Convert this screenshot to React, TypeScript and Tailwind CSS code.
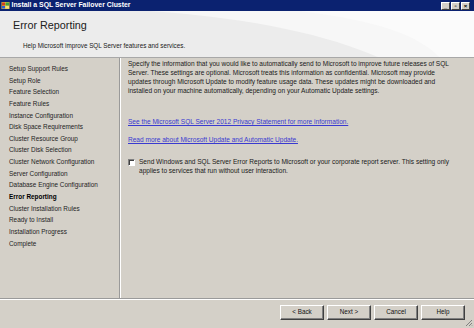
import type { ReactNode } from "react";

const steps = [
  "Setup Support Rules",
  "Setup Role",
  "Feature Selection",
  "Feature Rules",
  "Instance Configuration",
  "Disk Space Requirements",
  "Cluster Resource Group",
  "Cluster Disk Selection",
  "Cluster Network Configuration",
  "Server Configuration",
  "Database Engine Configuration",
  "Error Reporting",
  "Cluster Installation Rules",
  "Ready to Install",
  "Installation Progress",
  "Complete",
];

const font = "font-['Tahoma','Liberation_Sans',sans-serif]";

function WinButton({ children }: { children: ReactNode }) {
  return (
    <button className="w-[44px] h-[15px] bg-[#d4d0c8] text-[6.3px] text-[#111] leading-none border border-t-white border-l-white border-r-[#404040] border-b-[#404040] shadow-[inset_-1px_-1px_0_#808080]">
      {children}
    </button>
  );
}

function CaptionBtn({ children }: { children: ReactNode }) {
  return (
    <div className="w-[9px] h-[8px] bg-[#d4d0c8] border-[0.5px] border-t-white border-l-white border-r-[#404040] border-b-[#404040] flex items-center justify-center text-[6px] font-bold leading-none text-black">
      {children}
    </div>
  );
}

export default function App() {
  return (
    <div className={`w-[474px] h-[328px] bg-[#d4d0c8] flex flex-col overflow-hidden text-[#1a1a1a] ${font}`}>
      {/* Title bar */}
      <div className="h-[11px] bg-[#0b2270] flex items-center pl-[1px] pr-[4px]">
        <svg width="9" height="9" viewBox="0 0 9 9" className="shrink-0">
          <rect x="0.5" y="1" width="8" height="7" fill="#e8c040" />
          <rect x="1" y="1.5" width="3" height="3" fill="#d04020" />
          <rect x="4.5" y="1.5" width="3.5" height="3" fill="#40a040" />
          <rect x="1" y="5" width="3" height="2.5" fill="#3060d0" />
          <rect x="4.5" y="5" width="3.5" height="2.5" fill="#f0e080" />
        </svg>
        <span className="ml-[1.5px] text-white font-bold text-[6.9px] leading-none whitespace-nowrap">
          Install a SQL Server Failover Cluster
        </span>
        <div className="ml-auto flex gap-[1px] mt-[1px]">
          <CaptionBtn>_</CaptionBtn>
          <CaptionBtn>▫</CaptionBtn>
          <CaptionBtn>×</CaptionBtn>
        </div>
      </div>

      {/* Header */}
      <div className="relative h-[47px] bg-[#ececec] border-b border-[#a8a8a8] overflow-hidden">
        <svg className="absolute inset-0" width="474" height="47" viewBox="0 0 474 47">
          <path d="M150 0 C260 8 330 25 380 47 L474 47 L474 0 Z" fill="#f7f7f7" />
          <path d="M300 0 C380 10 420 25 440 47 L474 47 L474 0 Z" fill="#fbfbfb" />
        </svg>
        <div className="relative pl-[13px] pt-[7px]">
          <div className="text-[10.8px] leading-[14px] text-[#202020]">Error Reporting</div>
          <div className="pl-[10px] mt-[10px] text-[6.3px] leading-[8px] text-[#202020] whitespace-nowrap">
            Help Microsoft improve SQL Server features and services.
          </div>
        </div>
      </div>

      {/* Body */}
      <div className="flex h-[240px]">
        <div className="w-[120px] border-r border-[#9a9a9a] shadow-[1px_0_0_white] pt-[5px] pl-[9px]">
          {steps.map((s) => (
            <div
              key={s}
              className={`h-[11.65px] leading-[11.65px] text-[6.4px] whitespace-nowrap ${
                s === "Error Reporting" ? "font-bold text-black" : "text-[#1e1e1e]"
              }`}
            >
              {s}
            </div>
          ))}
        </div>
        <div className="flex-1 pl-[8px] pt-[1px] text-[6.55px] leading-[9px] whitespace-nowrap">
          <div>
            <div>Specify the information that you would like to automatically send to Microsoft to improve future releases of SQL</div>
            <div>Server. These settings are optional. Microsoft treats this information as confidential. Microsoft may provide</div>
            <div>updates through Microsoft Update to modify feature usage data. These updates might be downloaded and</div>
            <div>installed on your machine automatically, depending on your Automatic Update settings.</div>
          </div>
          <div className="mt-[22px] text-[#3a3ad0] underline">
            See the Microsoft SQL Server 2012 Privacy Statement for more information.
          </div>
          <div className="mt-[9px] text-[#3a3ad0] underline">
            Read more about Microsoft Update and Automatic Update.
          </div>
          <div className="mt-[13px] flex items-start">
            <div className="mt-[2px] w-[7px] h-[7px] bg-white border border-t-[#808080] border-l-[#808080] border-r-white border-b-white shadow-[inset_1px_1px_0_#404040] shrink-0" />
            <div className="ml-[4px]">
              <div>Send Windows and SQL Server Error Reports to Microsoft or your corporate report server. This setting only</div>
              <div>applies to services that run without user interaction.</div>
            </div>
          </div>
        </div>
      </div>

      {/* Footer */}
      <div className="relative flex-1 border-t border-[#9a9a9a] shadow-[inset_0_1px_0_white] flex items-start justify-end pt-[6px] pr-[9px] gap-[3px]">
        <WinButton>&lt; Back</WinButton>
        <WinButton>Next &gt;</WinButton>
        <WinButton>Cancel</WinButton>
        <WinButton>Help</WinButton>
        <svg className="absolute right-[1px] bottom-[1px]" width="8" height="8" viewBox="0 0 8 8">
          <path d="M7 1 L1 7 M7 4 L4 7 M7 6.5 L6.5 7" stroke="#808080" strokeWidth="1" />
        </svg>
      </div>
    </div>
  );
}
